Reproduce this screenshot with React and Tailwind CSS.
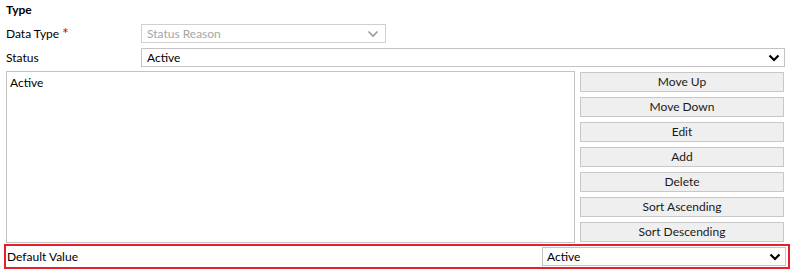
import React from "react";

function Chevron({ className }) {
  return (
    <svg width="12" height="8" viewBox="0 0 12 8" className={className}>
      <path d="M1.5 1.5 L6 6 L10.5 1.5" fill="none" stroke="currentColor" strokeWidth="2.2" strokeLinecap="butt" strokeLinejoin="miter" />
    </svg>
  );
}

function ThinChevron({ className }) {
  return (
    <svg width="12" height="8" viewBox="0 0 12 8" className={className}>
      <path d="M1.5 1.5 L6 6 L10.5 1.5" fill="none" stroke="currentColor" strokeWidth="1.6" />
    </svg>
  );
}

const buttons = ["Move Up", "Move Down", "Edit", "Add", "Delete", "Sort Ascending", "Sort Descending"];

export default function App() {
  return (
    <div
      className="w-[795px] h-[274px] bg-white text-black text-[12px] leading-[16px] overflow-hidden"
      style={{ fontFamily: 'Lato, "Noto Sans", sans-serif' }}
    >
      <div className="h-[24px] pl-[6px] pt-[2px] font-bold">Type</div>

      <div className="flex items-center h-[19px]">
        <div className="w-[141px] pl-[6px] flex items-start">
          Data Type<span className="text-[#c00000] ml-[3px] text-[15px] leading-[14px]">*</span>
        </div>
        <div className="w-[245px] h-[19px] border border-[#d0d0d0] flex items-center justify-between pl-[5px] pr-[6px] text-[#a6a6a6]">
          <span>Status Reason</span>
          <ThinChevron className="text-[#9a9a9a]" />
        </div>
      </div>

      <div className="flex items-center h-[19px] mt-[5px]">
        <div className="w-[141px] pl-[6px]">Status</div>
        <div className="w-[644px] h-[19px] border border-[#c4c4c4] flex items-center justify-between pl-[5px] pr-[4px]">
          <span>Active</span>
          <Chevron className="text-black" />
        </div>
      </div>

      <div className="flex mt-[4px] ml-[6px] h-[172px]">
        <div className="w-[569px] h-[172px] border border-[#c4c4c4] pl-[3px] pt-[3px]">Active</div>
        <div className="ml-[5px] w-[204px] flex flex-col gap-[5px] pt-[1px]">
          {buttons.map((b) => (
            <div
              key={b}
              className="h-[20px] border border-[#c8c8c8] bg-[#efefef] flex items-center justify-center text-[#1a1a1a]"
            >
              {b}
            </div>
          ))}
        </div>
      </div>

      <div className="ml-[4px] mt-[1px] w-[786px] h-[25px] border-2 border-[#e3202c] flex items-center justify-between pr-[2px]">
        <div className="pl-[1px]">Default Value</div>
        <div className="w-[244px] h-[19px] border border-[#c4c4c4] flex items-center justify-between pl-[4px] pr-[4px]">
          <span>Active</span>
          <Chevron className="text-black" />
        </div>
      </div>
    </div>
  );
}
